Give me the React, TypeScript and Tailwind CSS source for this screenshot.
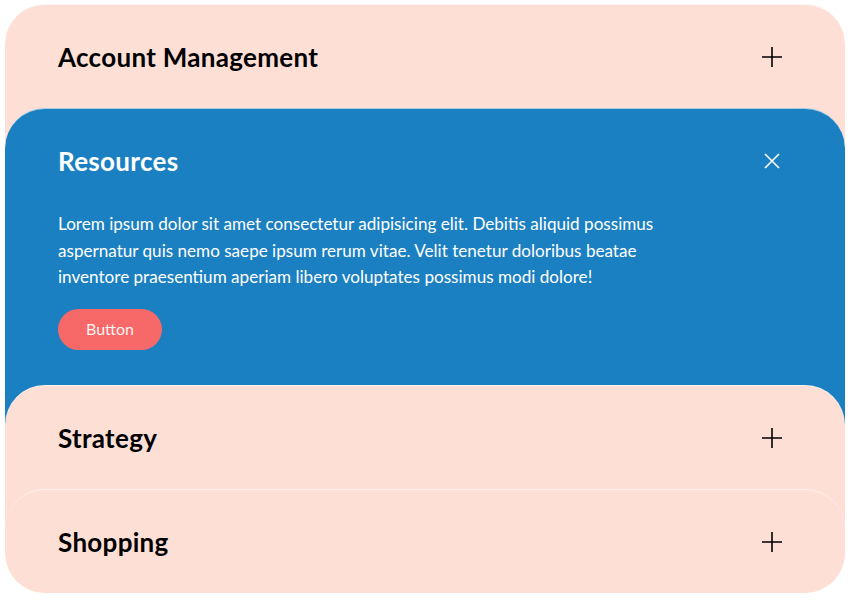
import { useState } from 'react';

interface Item {
  title: string;
  body: string;
}

const items: Item[] = [
  { title: 'Account Management', body: '' },
  {
    title: 'Resources',
    body: 'Lorem ipsum dolor sit amet consectetur adipisicing elit. Debitis aliquid possimus aspernatur quis nemo saepe ipsum rerum vitae. Velit tenetur doloribus beatae inventore praesentium aperiam libero voluptates possimus modi dolore!',
  },
  { title: 'Strategy', body: '' },
  { title: 'Shopping', body: '' },
];

function PlusIcon() {
  return (
    <svg width="22" height="22" viewBox="0 0 22 22" fill="none" stroke="currentColor" strokeWidth="1.6">
      <path d="M11 1v20M1 11h20" />
    </svg>
  );
}

function CloseIcon() {
  return (
    <svg width="22" height="22" viewBox="0 0 22 22" fill="none" stroke="currentColor" strokeWidth="1.6">
      <path d="M4 4l14 14M18 4L4 18" />
    </svg>
  );
}

export default function App() {
  const [open, setOpen] = useState<number | null>(1);

  return (
    <div
      className="min-h-[600px] bg-white px-[5px] pt-[4px]"
      style={{ fontFamily: 'Lato, "Open Sans", sans-serif' }}
    >
      {items.map((item, i) => {
        const isOpen = open === i;
        const isLast = i === items.length - 1;
        return (
          <div
            key={item.title}
            className={`relative rounded-[40px] border-t border-white/60 ${
              i > 0 ? '-mt-20' : ''
            } ${isLast ? 'pb-0' : 'pb-20'} ${
              isOpen ? 'bg-[#1b80c2] text-white' : 'bg-[#fddfd5] text-black'
            }`}
          >
            <button
              onClick={() => setOpen(isOpen ? null : i)}
              className="flex w-full items-center justify-between pl-[53px] pr-[62px] pt-[38px] pb-[37px] text-left"
            >
              <span className="text-[26px] font-bold leading-[28px] tracking-[0.3px]">{item.title}</span>
              {isOpen ? <CloseIcon /> : <PlusIcon />}
            </button>
            {isOpen && (
              <div className="-mt-px pl-[53px] pb-[35px]">
                <p className="max-w-[630px] text-[17.1px] leading-[26.5px]">{item.body}</p>
                <button className="mt-[18px] h-[41px] w-[104px] rounded-full bg-[#f76868] text-[16px] text-white/95">
                  Button
                </button>
              </div>
            )}
          </div>
        );
      })}
    </div>
  );
}
